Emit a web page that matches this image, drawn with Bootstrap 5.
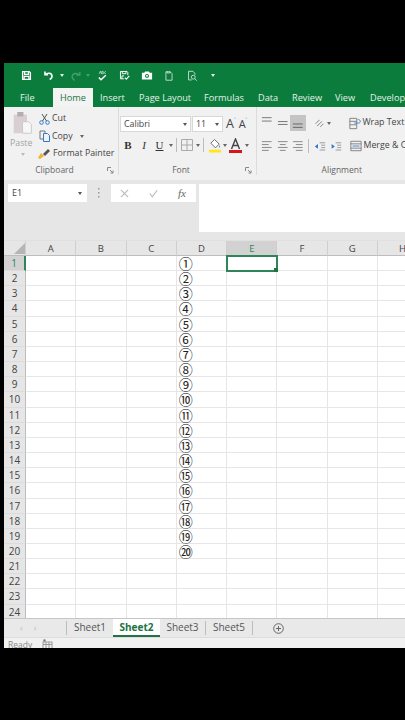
<!DOCTYPE html>
<html lang="en">
<head>
<meta charset="utf-8">
<title>Excel</title>
<link rel="stylesheet" href="https://cdn.jsdelivr.net/npm/bootstrap@5.3.0/dist/css/bootstrap.min.css">
<style>
html,body{height:720px;overflow:hidden;background:#000;}
body{font-family:"Open Sans","Noto Sans",sans-serif;font-size:9px;color:#444;padding:63px 0 72px 4px;}
.xl{height:585px;width:401px;overflow:hidden;background:#fff;}
svg{display:block;flex:none;}
.qat{height:25px;background:#0b7c3c;padding-left:17px;}
.tabbar{height:19px;background:#0b7c3c;color:#e4f1e9;font-size:9.2px;white-space:nowrap;}
.tabbar span{display:block;line-height:19px;flex:none;}
.tabfile{margin-left:16px;width:33px;}
.tabhome{width:40px;background:#f3f3f3;color:#217346;text-align:center;margin-right:7px;}
.tabins{width:39px;}.tabpage{width:65px;}.tabform{width:54px;}.tabdata{width:34px;}.tabrev{width:43px;}.tabview{width:35px;}
.ribbon{height:73px;background:#f1f1f1;color:#444;}
.grp{height:68px;border-right:1px solid #dcdcdc;flex:none;position:relative;}
.gclip{width:115px;}.gfont{width:138px;}.galign{width:148px;border-right:0;}
.glabel{position:absolute;top:57px;left:0;right:0;text-align:center;font-size:8.5px;line-height:11px;color:#666;}
.launch{position:absolute;right:4px;top:60px;}
.pastecol{width:35px;padding:5px 0 0 8px;color:#a3a3a3;font-size:8.8px;line-height:11px;flex:none;}
.clipcol{padding-top:3px;font-size:8.8px;line-height:17.500px;white-space:nowrap;}
.fontcol{padding:9px 0 0 1px;}
.fbox{height:16px;background:#fff;border:1px solid #d8d8d8;font-size:8.8px;line-height:14px;padding-left:3px;position:relative;flex:none;}
.fname{width:71px;}.fsize{width:31px;margin-left:1px;}
.caret{position:absolute;right:3px;top:6px;width:0;height:0;border-left:2.5px solid transparent;border-right:2.5px solid transparent;border-top:3px solid #555;}
.bigA{font-size:12.500px;line-height:16px;color:#444;flex:none;}
.sup{font-size:6px;line-height:8px;vertical-align:top;color:#2b7cd3;}
.fmt{font-family:"Liberation Serif",serif;font-size:11px;font-weight:700;color:#333;line-height:15px;width:16px;text-align:center;flex:none;}
.tinycaret{width:0;height:0;border-left:2.5px solid transparent;border-right:2.5px solid transparent;border-top:3px solid #666;flex:none;}
.tinycaret-w{border-top-color:#dfeee5;}
.alcol{padding:8px 0 0 2px;}
.albtn{width:15.500px;height:16px;flex:none;}
.albtn-on{background:#c4c4c4;}
.alwrap{white-space:nowrap;font-size:8.8px;flex:none;}
.fbar{height:60px;background:#e6e6e6;padding:4px 0 0 4px;flex:none;}
.namebox{width:79px;height:18px;background:#fff;font-size:9px;line-height:18px;padding-left:4px;position:relative;color:#444;flex:none;}
.fdots{width:24px;flex:none;}
.fbtns{width:85px;height:18px;background:#fff;flex:none;}
.finput{margin-left:3px;height:48px;flex:1;background:#fff;}
.sheet{height:378px;flex:none;overflow:hidden;display:grid;grid-template-columns:22px repeat(8,50.29px);grid-template-rows:15px repeat(24,15.17px);background:#fff;border-top:1px solid #e0e0e0;align-content:start;}
.hd{background:#e6e6e6;color:#444;font-size:9.5px;line-height:15px;text-align:center;border-right:1px solid #cfcfcf;border-bottom:1px solid #bdbdbd;}
.hd-on{background:#d2d2d2;color:#2f8558;border-bottom:1px solid #2f8558;}
.rh{background:#e6e6e6;color:#444;font-size:10px;line-height:15px;text-align:center;border-right:1px solid #bdbdbd;border-bottom:1px solid #dcdcdc;}
.rh-on{background:#d2d2d2;color:#2f8558;border-right:2px solid #2f8558;}
.cel{border-right:1px solid #e6e6e6;border-bottom:1px solid #e6e6e6;line-height:14px;position:relative;min-width:0;}
.cnum{font-family:"Noto Sans CJK JP","DejaVu Sans",sans-serif;font-size:14px;line-height:14px;color:#222;display:block;padding-left:2px;}
.cel-on{outline:2px solid #2f8558;outline-offset:-1px;z-index:2;}
.cel-on::after{content:"";position:absolute;right:-2px;bottom:-2px;width:4px;height:4px;background:#217346;}
.corner{width:0;height:0;border-left:11px solid transparent;border-bottom:11px solid #b5b5b5;margin:2px 0 0 10px;}
.sheettabs{height:19px;flex:none;background:#e9e9e9;border-top:1px solid #c6c6c6;font-size:10px;color:#555;white-space:nowrap;}
.navarrows{width:62px;padding-left:16px;gap:11px;color:#bbb;font-size:9px;line-height:18px;flex:none;}
.tsep{width:1px;height:14px;background:#bdbdbd;flex:none;}
.stab{line-height:17px;height:18px;text-align:center;flex:none;}
.st1{width:46px;}.st2{width:47px;background:#fff;color:#217346;font-weight:700;border-bottom:2px solid #217346;}.st3{width:45px;}.st5{width:46px;}
.addwrap{margin-left:20px;}
.status{height:11px;flex:none;background:#f1f1f1;border-top:1px solid #ddd;font-size:8.5px;line-height:11px;color:#888;padding:1px 0 0 4px;overflow:hidden;}
</style>
</head>
<body>
<div class="xl d-flex flex-column">
  <div class="qat d-flex align-items-center">
    <svg width="11" height="11" viewBox="0 0 14 14" fill="none" stroke="#fff" stroke-width="1.600"><path d="M2 2h8.500L12 3.500V12H2zM4.500 2v3.500h5V2M4 12V8h6v4"/></svg>
    <svg style="margin-left:11px" width="11" height="11" viewBox="0 0 14 14" fill="none" stroke="#fff" stroke-width="2"><path d="M2.500 2v4h4M3 6c2.500-3 8-2.500 8.500 1.500.2 2-1 3.500-3 4.500"/></svg>
    <span class="tinycaret tinycaret-w" style="margin-left:6px"></span>
    <svg style="margin-left:6px;opacity:.3" width="12" height="12" viewBox="0 0 14 14" fill="none" stroke="#cfe5d7" stroke-width="1.600"><path d="M11.500 2v4h-4M11 6C8.500 3 3 3.500 2.500 7.500c-.2 2 1 3.500 3 4.500"/></svg>
    <span class="tinycaret tinycaret-w" style="margin-left:4px;opacity:.3"></span>
    <svg style="margin-left:7px" width="11" height="12" viewBox="0 0 15 15" fill="none" stroke="#fff"><path d="M3 4.500L4.500 1l1.500 3.500M6.500 4.500V1.200h1.500c1 0 1 1.500 0 1.600 1.200 0 1.200 1.700 0 1.700H6.500M12 1.500c-2-.8-2.700 3.500 0 2.800" stroke-width=".8"/><path d="M2.500 9.500l3 3.200 6.500-6.200" stroke-width="2"/></svg>
    <svg style="margin-left:11px" width="11" height="11" viewBox="0 0 15 15" fill="none" stroke="#fff" stroke-width="1.300"><path d="M2 2h9l1 1v4M2 2v10h5M4.500 2v3h5V2M4 12V8h3"/><path d="M8 10.500l2 2 4-4.500" stroke-width="1.500"/></svg>
    <svg style="margin-left:11px" width="12" height="11" viewBox="0 0 15 14"><path fill="#fff" fill-rule="evenodd" d="M1 3.500h3L5 2h5l1 1.500h3V12H1zM7.500 5a2.500 2.500 0 1 0 .01 0zM7.500 6.300a1.200 1.200 0 1 1-.01 0z"/></svg>
    <svg style="margin-left:11px" width="10" height="12" viewBox="0 0 13 14" fill="none" stroke="#e6f2ea"><path d="M2.500 1.500h5.500l2.500 2.500v8.500h-8zM4 1v2h4V1"/></svg>
    <svg style="margin-left:13px" width="11" height="12" viewBox="0 0 14 15" fill="none" stroke="#e6f2ea"><path d="M2 1.500h5.500l2.500 2.500v2M2 1.500v11h4"/><circle cx="8" cy="9" r="2.500"/><path d="M10 11l2.500 2.500"/></svg>
    <span class="tinycaret tinycaret-w" style="margin-left:13px"></span>
  </div>
  <div class="tabbar d-flex">
    <span class="tabfile">File</span><span class="tabhome">Home</span><span class="tabins">Insert</span><span class="tabpage">Page Layout</span><span class="tabform">Formulas</span><span class="tabdata">Data</span><span class="tabrev">Review</span><span class="tabview">View</span><span>Developer</span>
  </div>
  <div class="ribbon d-flex">
    <div class="grp gclip d-flex">
      <div class="pastecol">
        <svg width="22" height="23" viewBox="0 0 23 26"><rect x="1" y="3" width="15" height="21" fill="#d9cfd3"/><rect x="5" y="0" width="7" height="5" fill="#b4adb0"/><path d="M11 11h7l3 3v10H11z" fill="#f7f7f7" stroke="#c8c8c8"/></svg>
        <div style="margin:3px 0 0 -2px">Paste</div>
        <div class="tinycaret" style="margin:4px 0 0 9px;border-top-color:#bbb"></div>
      </div>
      <div class="clipcol">
        <div class="d-flex align-items-center" style="gap:2px"><svg width="11" height="12" viewBox="0 0 11 12" fill="none" stroke="#555"><circle cx="2.500" cy="9.500" r="1.800" stroke="#2b7cd3"/><circle cx="8.500" cy="9.500" r="1.800" stroke="#2b7cd3"/><path d="M3.500 8L8 1M7.500 8L3 1"/></svg><span>Cut</span></div>
        <div class="d-flex align-items-center" style="gap:2px"><svg width="11" height="12" viewBox="0 0 11 12" fill="none" stroke="#777"><path d="M1 1h5v8H1z"/><path d="M4.500 3.500h4l2 2v6h-6z" fill="#f1f1f1" stroke="#2b7cd3"/></svg><span>Copy</span><span class="tinycaret" style="margin-left:5px"></span></div>
        <div class="d-flex align-items-center" style="gap:2px;margin-left:-1px"><svg width="13" height="12" viewBox="0 0 13 12"><path d="M0 10l3-5 3 3-4 3z" fill="#f2b233"/><path d="M5 6l5-5 2 2-5 5z" fill="#555"/></svg><span>Format Painter</span></div>
      </div>
      <div class="glabel" style="padding-right:13px">Clipboard</div>
      <svg class="launch" width="7" height="7" viewBox="0 0 7 7" fill="none" stroke="#888"><path d="M.5 4V.5H4M3 3l3 3M6 3.500V6H3.500"/></svg>
    </div>
    <div class="grp gfont fontcol">
      <div class="d-flex align-items-center">
        <div class="fbox fname">Calibri<span class="caret"></span></div>
        <div class="fbox fsize">11<span class="caret"></span></div>
        <span class="bigA" style="margin-left:3px">A<span class="sup">˄</span></span>
        <span class="bigA" style="margin-left:3px;font-size:11px">A<span class="sup">˅</span></span>
      </div>
      <div class="d-flex align-items-center" style="margin-top:5.500px">
        <span class="fmt">B</span>
        <span class="fmt" style="font-style:italic;font-weight:400">I</span>
        <span class="fmt text-decoration-underline" style="font-weight:400;width:15px">U</span>
        <span class="tinycaret" style="margin-left:2px"></span>
        <span class="tsep" style="margin:0 4px 0 3px"></span>
        <svg width="12" height="12" viewBox="0 0 12 12" fill="none" stroke="#aaa"><path d="M.5.500h11v11H.5zM6 .5v11M.5 6h11"/></svg>
        <span class="tinycaret" style="margin-left:3px"></span>
        <span class="tsep" style="margin:0 4px 0 3px"></span>
        <svg width="14" height="15" viewBox="0 0 15 15"><path d="M7 1l5 5-4 4-5-5z" fill="#fff" stroke="#666"/><path d="M12 7c1 1.500 1.500 2.500.7 3-.8 0-1-1.500-.7-3z" fill="#4a90d9"/><rect x="1" y="12" width="13" height="3" fill="#ffe81a"/></svg>
        <span class="tinycaret" style="margin-left:1px"></span>
        <svg style="margin-left:2px" width="13" height="15" viewBox="0 0 13 15"><path d="M2.500 11L6.500 1l4 10M4 7.500h5" fill="none" stroke="#444" stroke-width="1.400"/><rect y="12" width="13" height="3" fill="#d6141b"/></svg>
        <span class="tinycaret" style="margin-left:3px"></span>
      </div>
      <div class="glabel" style="padding-right:13px">Font</div>
      <svg class="launch" width="7" height="7" viewBox="0 0 7 7" fill="none" stroke="#888"><path d="M.5 4V.5H4M3 3l3 3M6 3.500V6H3.500"/></svg>
    </div>
    <div class="grp galign alcol">
      <div class="d-flex align-items-center">
        <svg class="albtn" viewBox="0 0 16 16" fill="none" stroke="#777"><path d="M3 2.500h10M3 6h10"/></svg>
        <svg class="albtn" viewBox="0 0 16 16" fill="none" stroke="#777"><path d="M3 6.500h10M3 9.500h10"/></svg>
        <svg class="albtn albtn-on" viewBox="0 0 16 16" fill="none" stroke="#666"><path d="M3 9h10M3 12.500h10"/></svg>
        <svg style="margin-left:8px" width="11" height="12" viewBox="0 0 14 14" fill="none" stroke="#666"><path d="M2 8l5-5M4 11l6-6M8 12l4-4"/></svg>
        <span class="tinycaret" style="margin-left:2px"></span>
        <svg style="margin-left:18px" width="12" height="13" viewBox="0 0 14 15" fill="none" stroke="#777"><path d="M1 1.500h8v12H1zM1 5h8M1 9h8"/><path d="M6 7h5c3 0 3-4 0-4l-1 0" stroke="#2b7cd3"/></svg>
        <span class="alwrap" style="margin-left:2px">Wrap Text</span>
      </div>
      <div class="d-flex align-items-center" style="margin-top:7px">
        <svg class="albtn" viewBox="0 0 16 16" fill="none" stroke="#888"><path d="M3 3.500h10M3 6.500h7M3 9.500h10M3 12.500h7"/></svg>
        <svg class="albtn" viewBox="0 0 16 16" fill="none" stroke="#888"><path d="M3 3.500h10M5 6.500h6M3 9.500h10M5 12.500h6"/></svg>
        <svg class="albtn" viewBox="0 0 16 16" fill="none" stroke="#888"><path d="M3 3.500h10M6 6.500h7M3 9.500h10M6 12.500h7"/></svg>
        <span class="tsep" style="margin:0 5px 0 2px"></span>
        <svg width="12" height="12" viewBox="0 0 15 14"><path d="M7 3h7M9 6h5M9 9h5M7 12h7" stroke="#888" fill="none"/><path d="M1 7.500l4-3v6z" fill="#2b7cd3"/></svg>
        <svg style="margin-left:4px" width="12" height="12" viewBox="0 0 15 14"><path d="M7 3h7M9 6h5M9 9h5M7 12h7" stroke="#888" fill="none"/><path d="M6 7.500l-4-3v6z" fill="#2b7cd3"/></svg>
        <svg style="margin-left:8px" width="12" height="12" viewBox="0 0 14 13" fill="none" stroke="#777"><path d="M1 1h12v11H1zM1 4h12M1 9h12"/><path d="M3 6.500h8" stroke="#2b7cd3"/></svg>
        <span class="alwrap" style="margin-left:2px">Merge &amp; Center</span>
      </div>
      <div class="glabel" style="right:auto;width:105px;text-align:right">Alignment</div>
    </div>
  </div>
  <div class="fbar d-flex">
    <div class="namebox">E1<span class="caret" style="top:8px;right:5px"></span></div>
    <div class="fdots d-flex justify-content-center" style="padding-top:4px"><svg width="2" height="10" viewBox="0 0 2 10" fill="#999"><rect y="0" width="1.500" height="1.500"/><rect y="4" width="1.500" height="1.500"/><rect y="8" width="1.500" height="1.500"/></svg></div>
    <div class="fbtns d-flex align-items-center" style="padding-left:9px">
      <svg width="9" height="9" viewBox="0 0 10 10" fill="none" stroke="#bbb" stroke-width="1.300"><path d="M1 1l8 8M9 1l-8 8"/></svg>
      <svg style="margin-left:20px" width="9" height="9" viewBox="0 0 11 10" fill="none" stroke="#bbb" stroke-width="1.400"><path d="M1 5l3 4 6-8"/></svg>
      <span style="margin-left:20px;font-family:'Liberation Serif',serif;font-style:italic;font-size:11px;color:#666">fx</span>
    </div>
    <div class="finput"></div>
  </div>
  <div class="sheet" id="sheet">
    <div class="hd"><div class="corner"></div></div>
  </div>
  <div class="sheettabs d-flex align-items-center">
    <div class="navarrows d-flex"><span>‹</span><span>›</span></div>
    <span class="tsep"></span>
    <span class="stab st1">Sheet1</span><span class="stab st2">Sheet2</span><span class="stab st3">Sheet3</span>
    <span class="tsep"></span>
    <span class="stab st5">Sheet5</span>
    <span class="tsep"></span>
    <svg class="addwrap" width="11" height="11" viewBox="0 0 11 11" fill="none" stroke="#666"><circle cx="5.500" cy="5.500" r="4.800"/><path d="M5.500 3v5M3 5.500h5"/></svg>
  </div>
  <div class="status d-flex">
    <span>Ready</span>
    <svg style="margin-left:10px" width="11" height="10" viewBox="0 0 11 10" fill="none" stroke="#999"><rect x="1" y="3" width="9" height="7"/><path d="M1 5.500h9M4 3v7M7 3v7"/><circle cx="2.500" cy="1.500" r="1" fill="#777"/></svg>
  </div>
</div>
<script>
var s=document.getElementById('sheet'),h='',L='ABCDEFGH',C='①②③④⑤⑥⑦⑧⑨⑩⑪⑫⑬⑭⑮⑯⑰⑱⑲⑳';
for(var i=0;i<8;i++)h+='<div class="hd'+(i==4?' hd-on':'')+'">'+L[i]+'</div>';
for(var r=1;r<=24;r++){h+='<div class="rh'+(r==1?' rh-on':'')+'">'+r+'</div>';
for(i=0;i<8;i++){var t=(i==3&&r<=20)?'<span class="cnum">'+C[r-1]+'</span>':'';h+='<div class="cel'+((i==4&&r==1)?' cel-on':'')+'">'+t+'</div>';}}
s.insertAdjacentHTML('beforeend',h);
</script>
<script src="https://cdn.jsdelivr.net/npm/bootstrap@5.3.0/dist/js/bootstrap.bundle.min.js"></script>
</body>
</html>
